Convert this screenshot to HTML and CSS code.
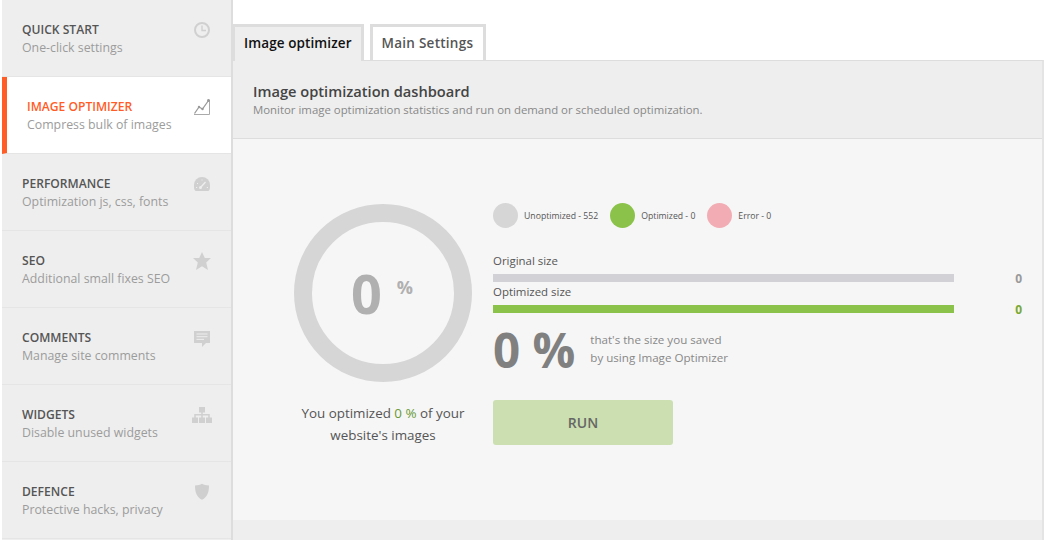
FILE: index.html
```html
<!DOCTYPE html>
<html lang="en">
<head>
<meta charset="utf-8">
<title>Image optimizer</title>
<link rel="stylesheet" href="styles.css">
</head>
<body>
<div class="page">
  <nav class="sidebar">
    <a class="item">
      <span class="item-text"><b>QUICK START</b><small>One-click settings</small></span>
      <svg class="ico" viewBox="0 0 18 18"><circle cx="9" cy="9" r="7" fill="none" stroke="#d0d0d0" stroke-width="2"/><path d="M9 4.5V9.5H13" fill="none" stroke="#d0d0d0" stroke-width="1.4"/></svg>
    </a>
    <a class="item active">
      <span class="item-text"><b>IMAGE OPTIMIZER</b><small>Compress bulk of images</small></span>
      <svg class="ico" viewBox="0 0 18 18"><path d="M1 16.5H16.5V2" fill="none" stroke="#aaa" stroke-width="1"/><path d="M1.5 15.5L6 9L9.5 11L15.5 2.5" fill="none" stroke="#999" stroke-width="1.3"/><circle cx="15.5" cy="2.5" r="1.4" fill="#999"/><circle cx="6" cy="9" r="1.2" fill="#999"/><circle cx="9.5" cy="11" r="1.2" fill="#999"/></svg>
    </a>
    <a class="item">
      <span class="item-text"><b>PERFORMANCE</b><small>Optimization js, css, fonts</small></span>
      <svg class="ico" viewBox="0 0 18 18"><path d="M1 10A8 8 0 0 1 17 10V12C17 14 16.3 16 15 16H3C1.7 16 1 14 1 12Z" fill="#d0d0d0"/><path d="M7.5 12.5L12.5 7" stroke="#eee" stroke-width="1.3"/><circle cx="7.5" cy="12.5" r="1.5" fill="#eee"/><path d="M4 8.5h1M9 4.5v1M3 12.5h1.2M13.8 12.5H15" stroke="#eee" stroke-width="1"/></svg>
    </a>
    <a class="item">
      <span class="item-text"><b>SEO</b><small>Additional small fixes SEO</small></span>
      <svg class="ico" viewBox="0 0 18 18"><path d="M9 0L11.8 6H18L13.2 10.4L15 18L9 14.2L3 18L4.8 10.4L0 6H6.2Z" fill="#d0d0d0"/></svg>
    </a>
    <a class="item">
      <span class="item-text"><b>COMMENTS</b><small>Manage site comments</small></span>
      <svg class="ico" viewBox="0 0 18 18"><path d="M1 2H17V14H13L9 18V14H1Z" fill="#d0d0d0"/><path d="M3.5 5H14.5M3.5 7.7H14.5M3.5 10.4H11" stroke="#eee" stroke-width="1"/></svg>
    </a>
    <a class="item">
      <span class="item-text"><b>WIDGETS</b><small>Disable unused widgets</small></span>
      <svg class="ico ico-xl" viewBox="0 0 20 18"><path d="M7 1H13V6.5H7ZM0 11.5H6V17H0ZM7 11.5H13V17H7ZM14 11.5H20V17H14Z" fill="#d0d0d0"/><path d="M3 12V8.7H17V12M10 6V12" fill="none" stroke="#d0d0d0" stroke-width="1.5"/></svg>
    </a>
    <a class="item">
      <span class="item-text"><b>DEFENCE</b><small>Protective hacks, privacy</small></span>
      <svg class="ico" viewBox="0 0 18 18"><path d="M2 2.5C5 2.5 7 1.8 9 .8C11 1.8 13 2.5 16 2.5C16 9 14.5 14 9 16.8C3.5 14 2 9 2 2.5Z" fill="#cfcfcf"/></svg>
    </a>
  </nav>
  <main class="main">
    <div class="tabs">
      <span class="tab current">Image optimizer</span>
      <span class="tab">Main Settings</span>
    </div>
    <section class="panel">
      <header class="panel-head">
        <h1>Image optimization dashboard</h1>
        <p>Monitor image optimization statistics and run on demand or scheduled optimization.</p>
      </header>
      <div class="panel-body">
        <div class="left">
          <div class="ring"><span class="ring-num">0</span><span class="ring-pct">%</span></div>
          <p class="note">You optimized <em>0 %</em> of your<br>website's images</p>
        </div>
        <div class="right">
          <ul class="legend">
            <li><i class="dot grey"></i>Unoptimized - 552</li>
            <li><i class="dot green"></i>Optimized - 0</li>
            <li><i class="dot pink"></i>Error - 0</li>
          </ul>
          <div class="sizes">
            <div class="size-label">Original size</div>
            <div class="size-row"><div class="bar"></div><span class="val">0</span></div>
            <div class="size-label second">Optimized size</div>
            <div class="size-row"><div class="bar done"></div><span class="val done">0</span></div>
          </div>
          <div class="saved">
            <strong>0 %</strong>
            <span>that's the size you saved<br>by using Image Optimizer</span>
          </div>
          <button class="run" type="button">RUN</button>
        </div>
      </div>
    </section>
  </main>
</div>
</body>
</html>
```
FILE: styles.css
```css
* { box-sizing: border-box; }
html, body { margin: 0; height: 100%; overflow: hidden; background: #fff; }
body { font-family: "Open Sans", "Noto Sans", "Liberation Sans", sans-serif; color: #444; }
.page { display: flex; height: 540px; }

.sidebar { width: 231px; flex: none; margin-left: 2px; border-right: 2px solid #ddd; background: #eee; }
.item { display: flex; justify-content: space-between; height: 77px; padding: 21px 20px 0 20px; background: #eee; border-bottom: 1px solid #e5e5e5; }
.item-text { display: flex; flex-direction: column; }
.item b { font-size: 12.1px; line-height: 18px; font-weight: 600; color: #555; }
.item small { font-size: 12.33px; line-height: 18px; color: #9c9c9c; }
.item.active { background: #fff; border-left: 5px solid #ff5c26; padding-left: 20px; }
.item.active b { color: #ff5c26; }
.ico { width: 18px; height: 18px; flex: none; }
.ico-xl { width: 20px; margin-right: -1px; }

.main { flex: 1; min-width: 0; display: flex; flex-direction: column; }
.tabs { display: flex; gap: 6px; height: 36px; margin-top: 24px; margin-left: -1px; position: relative; z-index: 1; }
.tab { height: 36px; padding: 0 9px; border: 3px solid #ddd; border-bottom: 0; font-size: 13.5px; font-weight: 600; line-height: 32px; color: #555; background: #fff; letter-spacing: .1px; }
.tab + .tab { padding: 0 10px 0 9px; letter-spacing: .25px; }
.tab.current { background: #eee; color: #111; height: 37px; }
.panel { flex: 1; display: flex; flex-direction: column; border-top: 1px solid #ddd; border-right: 2px solid #e4e4e4; background: #eee; }
.panel-head { height: 78px; padding: 20px 20px 0; background: #eee; border-bottom: 1px solid #ddd; }
.panel-head h1 { margin: 0; font-size: 14.65px; line-height: 20px; font-weight: 600; color: #444; }
.panel-head p { margin: 1px 0 0; font-size: 11.4px; line-height: 16px; color: #888; }
.panel-body { display: flex; height: 381px; background: #f6f6f6; }

.left { width: 260px; padding: 65px 0 0 40px; display: flex; flex-direction: column; align-items: center; flex: none; }
.ring { width: 178px; height: 178px; border-radius: 50%; border: 18px solid #d6d6d6; display: flex; align-items: center; justify-content: center; }
.ring-num { font-size: 54px; line-height: 60px; font-weight: 700; color: #b0b0b0; margin-left: -2px; }
.ring-pct { font-size: 18px; font-weight: 700; color: #b0b0b0; margin: -13px 0 0 15px; }
.note { margin: 21px 0 0; font-size: 13.4px; line-height: 21.6px; text-align: center; color: #555; white-space: nowrap; }
.note em { font-style: normal; color: #6a9a35; }

.right { flex: 1; padding-top: 64px; padding-right: 20px; }
.legend { list-style: none; margin: 0; padding: 0; display: flex; font-size: 8.7px; color: #555; }
.legend li { display: flex; align-items: center; gap: 6px; margin-right: 12px; }
.dot { width: 25px; height: 25px; border-radius: 50%; }
.dot.grey { background: #d6d6d6; }
.dot.green { background: #8bc34a; }
.dot.pink { background: #f2adb4; }
.sizes { margin-top: 25px; }
.size-label { font-size: 11.45px; line-height: 16px; color: #555; }
.size-label.second { margin-top: 2px; }
.size-row { display: flex; align-items: center; height: 8px; margin-top: 5px; justify-content: space-between; }
.bar { width: 461px; height: 8px; background: #d1d1d6; }
.bar.done { background: #8bc34a; }
.val { font-size: 12px; line-height: 8px; font-weight: 700; color: #999; margin-top: 2px; }
.val.done { color: #7aa832; }
.saved { display: flex; align-items: center; margin-top: 9px; }
.saved strong { font-size: 47.5px; line-height: 56px; font-weight: 700; color: #808080; }
.saved span { margin: -2px 0 0 15px; font-size: 11.6px; line-height: 18px; color: #888; }
.run { display: block; width: 180px; height: 45px; margin-top: 22px; border: 0; border-radius: 3px; background: #cbdfb0; font: 600 14px "Open Sans", "Noto Sans", sans-serif; color: #666; }
```
